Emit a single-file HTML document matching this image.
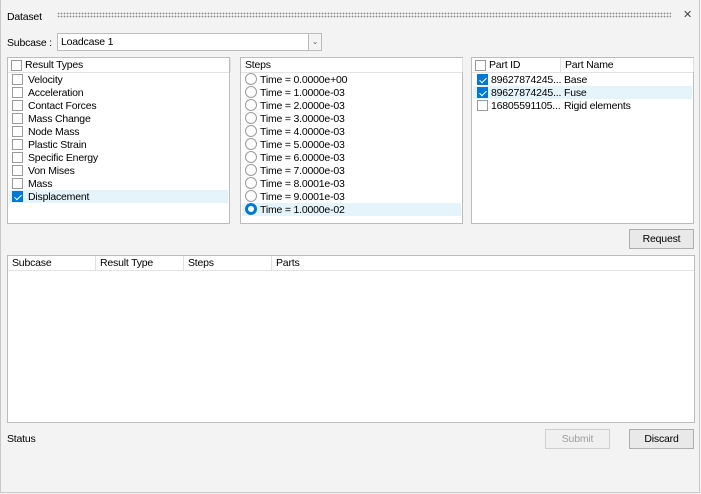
<!DOCTYPE html><html><head><style>
*{box-sizing:border-box;margin:0;padding:0}
body{width:701px;height:494px;background:#f3f3f3;font-family:"Liberation Sans",sans-serif;font-size:10.5px;letter-spacing:-0.2px;color:#000;position:relative;overflow:hidden}
.a{position:absolute}
.frame{left:0;top:0;width:700px;height:493px;border:1px solid #c8c8c8;border-top:none}
.panel{background:#fff;border:1px solid #bcbcbc}
.hdr{position:absolute;left:0;right:0;top:0;height:15px;background:#fff;border-bottom:1px solid #e3e3e3}
.hd{position:absolute;top:0;height:14px;line-height:15px;padding-left:4px;border-right:1px solid #e0e0e0}
.row{position:absolute;left:1px;right:1px;height:13px;line-height:14px}
.sel{background:#e5f3fb}
.cb{position:absolute;width:11px;height:11px;border:1px solid #9a9a9a;background:#fff;top:1px}
.cb.on{background:#0078d7;border-color:#0078d7}
.cb.on:after{content:"";position:absolute;left:3px;top:1px;width:3px;height:6px;border:solid #fff;border-width:0 1.5px 1.5px 0;transform:rotate(45deg)}
.rb{position:absolute;width:12px;height:12px;border:1px solid #9a9a9a;border-radius:50%;background:#fff;top:0;left:3px}
.rb.on{border:3px solid #0078d7}
.btn{position:absolute;border:1px solid #adadad;background:#e9e9e9;text-align:center;line-height:19px;height:20px;width:65px}
</style></head><body>
<div class="a frame"></div>
<div class="a" style="left:7px;top:10px;line-height:14px">Dataset</div>
<div class="a" style="left:57px;top:12px;width:614px;height:6px;background-image:radial-gradient(circle,#8a8a8a 0.7px,transparent 1px);background-size:3px 3px"></div>
<div class="a" style="left:683px;top:9px;font-size:11px;line-height:12px;color:#444">✕</div>

<div class="a" style="left:7px;top:36px;line-height:14px">Subcase :</div>
<div class="a" style="left:57px;top:33px;width:252px;height:18px;border:1px solid #bcbcbc;background:#fff;line-height:17px;padding-left:3px">Loadcase 1</div>
<div class="a" style="left:308px;top:33px;width:14px;height:18px;border:1px solid #bcbcbc;background:#f3f3f3;font-size:8px;line-height:16px;text-align:center;color:#666">⌄</div>

<div class="a panel" style="left:7px;top:57px;width:223px;height:167px">
<div class="hdr"><div class="cb" style="left:3px;top:2px"></div><div class="hd" style="left:13px;width:210px;padding-left:4px">Result Types</div></div>
<div class="row" style="top:15px"><div class="cb" style="left:3px"></div><span style="margin-left:19px">Velocity</span></div>
<div class="row" style="top:28px"><div class="cb" style="left:3px"></div><span style="margin-left:19px">Acceleration</span></div>
<div class="row" style="top:41px"><div class="cb" style="left:3px"></div><span style="margin-left:19px">Contact Forces</span></div>
<div class="row" style="top:54px"><div class="cb" style="left:3px"></div><span style="margin-left:19px">Mass Change</span></div>
<div class="row" style="top:67px"><div class="cb" style="left:3px"></div><span style="margin-left:19px">Node Mass</span></div>
<div class="row" style="top:80px"><div class="cb" style="left:3px"></div><span style="margin-left:19px">Plastic Strain</span></div>
<div class="row" style="top:93px"><div class="cb" style="left:3px"></div><span style="margin-left:19px">Specific Energy</span></div>
<div class="row" style="top:106px"><div class="cb" style="left:3px"></div><span style="margin-left:19px">Von Mises</span></div>
<div class="row" style="top:119px"><div class="cb" style="left:3px"></div><span style="margin-left:19px">Mass</span></div>
<div class="row sel" style="top:132px"><div class="cb on" style="left:3px"></div><span style="margin-left:19px">Displacement</span></div>
</div>

<div class="a panel" style="left:240px;top:57px;width:223px;height:167px">
<div class="hdr"><div class="hd" style="left:0;width:222px">Steps</div></div>
<div class="row" style="top:15px"><div class="rb"></div><span style="margin-left:18px">Time = 0.0000e+00</span></div>
<div class="row" style="top:28px"><div class="rb"></div><span style="margin-left:18px">Time = 1.0000e-03</span></div>
<div class="row" style="top:41px"><div class="rb"></div><span style="margin-left:18px">Time = 2.0000e-03</span></div>
<div class="row" style="top:54px"><div class="rb"></div><span style="margin-left:18px">Time = 3.0000e-03</span></div>
<div class="row" style="top:67px"><div class="rb"></div><span style="margin-left:18px">Time = 4.0000e-03</span></div>
<div class="row" style="top:80px"><div class="rb"></div><span style="margin-left:18px">Time = 5.0000e-03</span></div>
<div class="row" style="top:93px"><div class="rb"></div><span style="margin-left:18px">Time = 6.0000e-03</span></div>
<div class="row" style="top:106px"><div class="rb"></div><span style="margin-left:18px">Time = 7.0000e-03</span></div>
<div class="row" style="top:119px"><div class="rb"></div><span style="margin-left:18px">Time = 8.0001e-03</span></div>
<div class="row" style="top:132px"><div class="rb"></div><span style="margin-left:18px">Time = 9.0001e-03</span></div>
<div class="row sel" style="top:145px"><div class="rb on"></div><span style="margin-left:18px">Time = 1.0000e-02</span></div>
</div>

<div class="a panel" style="left:471px;top:57px;width:223px;height:167px">
<div class="hdr"><div class="cb" style="left:3px;top:2px"></div><div class="hd" style="left:13px;width:76px">Part ID</div><div class="hd" style="left:89px;width:133px">Part Name</div></div>
<div class="row" style="top:15px"><div class="cb on" style="left:4px"></div><span class="a" style="left:18px">89627874245...</span><span class="a" style="left:91px">Base</span></div>
<div class="row sel" style="top:28px"><div class="cb on" style="left:4px"></div><span class="a" style="left:18px">89627874245...</span><span class="a" style="left:91px">Fuse</span></div>
<div class="row" style="top:41px"><div class="cb" style="left:4px"></div><span class="a" style="left:18px">16805591105...</span><span class="a" style="left:91px">Rigid elements</span></div>
</div>

<div class="btn" style="left:629px;top:229px">Request</div>

<div class="a panel" style="left:7px;top:255px;width:688px;height:168px">
<div class="hdr"><div class="hd" style="left:0;width:88px">Subcase</div><div class="hd" style="left:88px;width:88px">Result Type</div><div class="hd" style="left:176px;width:88px">Steps</div><div class="hd" style="left:264px;width:422px;border-right:none">Parts</div></div>
</div>

<div class="a" style="left:7px;top:432px;line-height:14px">Status</div>
<div class="btn" style="left:545px;top:429px;color:#a0a0a0;border-color:#cfcfcf;background:#f0f0f0">Submit</div>
<div class="btn" style="left:629px;top:429px">Discard</div>
</body></html>
